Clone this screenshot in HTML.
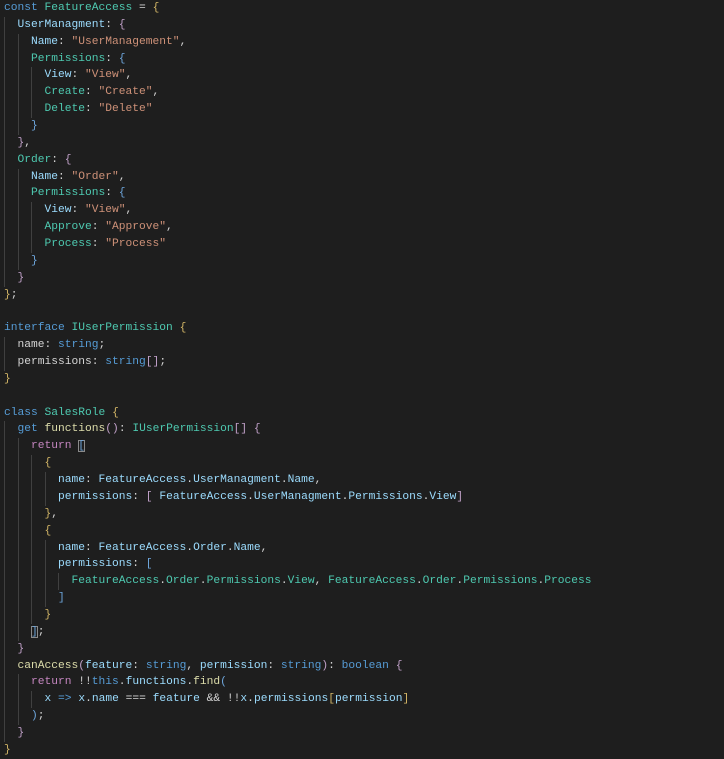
<!DOCTYPE html>
<html><head><meta charset="utf-8"><style>
body{margin:0;background:#1e1e1e;width:724px;height:758px;overflow:hidden}
pre{margin:0;position:absolute;left:4px;top:0px;font-family:"Liberation Mono",monospace;font-size:11.25px;line-height:16.86px;color:#d4d4d4}
.g{display:inline-block;width:13.5px;height:16.86px;vertical-align:top;box-shadow:inset 1px 0 0 #404040}
.k{color:#569cd6}.t{color:#4ec9b0}.p{color:#9cdcfe}.s{color:#ce9178}.r{color:#c586c0}.f{color:#dcdcaa}.w{color:#d4d4d4}
.b1{color:#d2b566}.b2{color:#c0a0c8}.b3{color:#6ea6dc}
.c{box-shadow:inset 0 0 0 1px #8a8a8a}
</style></head><body><pre><span class="k">const</span> <span class="t">FeatureAccess</span> = <span class="b1">{</span>
<span class="g"></span><span class="p">UserManagment</span>: <span class="b2">{</span>
<span class="g"></span><span class="g"></span><span class="p">Name</span>: <span class="s">"UserManagement"</span>,
<span class="g"></span><span class="g"></span><span class="t">Permissions</span>: <span class="b3">{</span>
<span class="g"></span><span class="g"></span><span class="g"></span><span class="p">View</span>: <span class="s">"View"</span>,
<span class="g"></span><span class="g"></span><span class="g"></span><span class="t">Create</span>: <span class="s">"Create"</span>,
<span class="g"></span><span class="g"></span><span class="g"></span><span class="t">Delete</span>: <span class="s">"Delete"</span>
<span class="g"></span><span class="g"></span><span class="b3">}</span>
<span class="g"></span><span class="b2">}</span>,
<span class="g"></span><span class="t">Order</span>: <span class="b2">{</span>
<span class="g"></span><span class="g"></span><span class="p">Name</span>: <span class="s">"Order"</span>,
<span class="g"></span><span class="g"></span><span class="t">Permissions</span>: <span class="b3">{</span>
<span class="g"></span><span class="g"></span><span class="g"></span><span class="p">View</span>: <span class="s">"View"</span>,
<span class="g"></span><span class="g"></span><span class="g"></span><span class="t">Approve</span>: <span class="s">"Approve"</span>,
<span class="g"></span><span class="g"></span><span class="g"></span><span class="t">Process</span>: <span class="s">"Process"</span>
<span class="g"></span><span class="g"></span><span class="b3">}</span>
<span class="g"></span><span class="b2">}</span>
<span class="b1">}</span>;

<span class="k">interface</span> <span class="t">IUserPermission</span> <span class="b1">{</span>
<span class="g"></span><span class="w">name</span>: <span class="k">string</span>;
<span class="g"></span><span class="w">permissions</span>: <span class="k">string</span><span class="b2">[]</span>;
<span class="b1">}</span>

<span class="k">class</span> <span class="t">SalesRole</span> <span class="b1">{</span>
<span class="g"></span><span class="k">get</span> <span class="f">functions</span><span class="b2">()</span>: <span class="t">IUserPermission</span><span class="b2">[]</span> <span class="b2">{</span>
<span class="g"></span><span class="g"></span><span class="r">return</span> <span class="b3 c">[</span>
<span class="g"></span><span class="g"></span><span class="g"></span><span class="b1">{</span>
<span class="g"></span><span class="g"></span><span class="g"></span><span class="g"></span><span class="p">name</span>: <span class="p">FeatureAccess</span>.<span class="p">UserManagment</span>.<span class="p">Name</span>,
<span class="g"></span><span class="g"></span><span class="g"></span><span class="g"></span><span class="p">permissions</span>: <span class="b2">[</span> <span class="p">FeatureAccess</span>.<span class="p">UserManagment</span>.<span class="p">Permissions</span>.<span class="p">View</span><span class="b2">]</span>
<span class="g"></span><span class="g"></span><span class="g"></span><span class="b1">}</span>,
<span class="g"></span><span class="g"></span><span class="g"></span><span class="b1">{</span>
<span class="g"></span><span class="g"></span><span class="g"></span><span class="g"></span><span class="p">name</span>: <span class="p">FeatureAccess</span>.<span class="p">Order</span>.<span class="p">Name</span>,
<span class="g"></span><span class="g"></span><span class="g"></span><span class="g"></span><span class="p">permissions</span>: <span class="b3">[</span>
<span class="g"></span><span class="g"></span><span class="g"></span><span class="g"></span><span class="g"></span><span class="t">FeatureAccess</span>.<span class="t">Order</span>.<span class="t">Permissions</span>.<span class="t">View</span>, <span class="t">FeatureAccess</span>.<span class="t">Order</span>.<span class="t">Permissions</span>.<span class="t">Process</span>
<span class="g"></span><span class="g"></span><span class="g"></span><span class="g"></span><span class="b3">]</span>
<span class="g"></span><span class="g"></span><span class="g"></span><span class="b1">}</span>
<span class="g"></span><span class="g"></span><span class="b3 c">]</span>;
<span class="g"></span><span class="b2">}</span>
<span class="g"></span><span class="f">canAccess</span><span class="b2">(</span><span class="p">feature</span>: <span class="k">string</span>, <span class="p">permission</span>: <span class="k">string</span><span class="b2">)</span>: <span class="k">boolean</span> <span class="b2">{</span>
<span class="g"></span><span class="g"></span><span class="r">return</span> !!<span class="k">this</span>.<span class="p">functions</span>.<span class="f">find</span><span class="b3">(</span>
<span class="g"></span><span class="g"></span><span class="g"></span><span class="p">x</span> <span class="k">=&gt;</span> <span class="p">x</span>.<span class="p">name</span> === <span class="p">feature</span> &amp;&amp; !!<span class="p">x</span>.<span class="p">permissions</span><span class="b1">[</span><span class="p">permission</span><span class="b1">]</span>
<span class="g"></span><span class="g"></span><span class="b3">)</span>;
<span class="g"></span><span class="b2">}</span>
<span class="b1">}</span></pre></body></html>
